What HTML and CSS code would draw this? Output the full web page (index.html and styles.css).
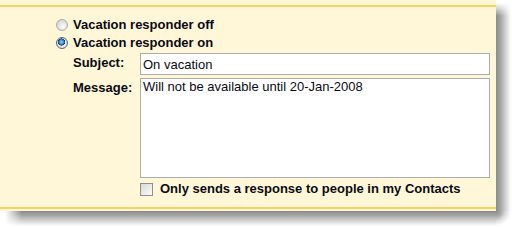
FILE: index.html
```html
<!doctype html>
<html lang="en">
<head>
<meta charset="utf-8">
<title>Vacation responder</title>
<link rel="stylesheet" href="styles.css">
</head>
<body>

<div class="frame">
    <div class="panel">
        <div class="box">
            <label class="opt"><input class="radio" type="radio" name="vac"> Vacation responder off</label>
            <label class="opt"><input class="radio" type="radio" name="vac" checked> Vacation responder on</label>

            <div class="fields">
                <span class="lbl">Subject:</span>
                <input class="subject" type="text" value="On vacation">
                <span class="lbl">Message:</span>
                <textarea class="message">Will not be available until 20-Jan-2008</textarea>
                <span></span>
                <label class="check"><input class="box-check" type="checkbox"> Only sends a response to people in my Contacts</label>
            </div>
        </div>
    </div>
</div>

</body>
</html>
```

FILE: styles.css
```css
body{
    margin: 0;
    background: #fff;
    font-family: "Liberation Sans", Arial, sans-serif;
    font-size: 13px;
    color: #0a0a14;
}
/* frame paints the drop shadow round the panel */
.frame{
    width: 511px;
    height: 226px;
    background:
        linear-gradient(to bottom, #fff 3px, rgba(255,255,255,0) 16px) 496px 0 / 15px 16px no-repeat,
        linear-gradient(to right, #fff 5px, rgba(255,255,255,0) 22px) 0 211px / 22px 15px no-repeat,
        linear-gradient(to right, #8a8a8a, #a6a6a6 30%, #dadada 70%, #fff) 496px 0 / 15px 211px no-repeat,
        linear-gradient(to bottom, #8a8a8a, #a6a6a6 30%, #dadada 70%, #fff) 0 211px / 496px 15px no-repeat,
        radial-gradient(circle at 0 0, #8a8a8a, #a8a8a8 5px, #e0e0e0 10px, #fff 15px) 496px 211px / 15px 15px no-repeat,
        #fff;
}
.panel{
    width: 496px;
    height: 211px;
    padding-top: 5px;
    box-sizing: border-box;
    background-color: #fff7d7;
}
.box{
    padding: 9px 0 9px 0;
    border-top: 2px solid #fad163;
    border-bottom: 2px solid #fad163;
}
.opt{
    display: flex;
    align-items: center;
    height: 18px;
    padding-left: 56px;
    font-weight: bold;
    line-height: 18px;
}
.radio{
    appearance: none;
    -webkit-appearance: none;
    width: 12px;
    height: 12px;
    margin: 0 5px 0 0;
    border: 1px solid #a9a9a9;
    border-radius: 50%;
    box-sizing: border-box;
    background: radial-gradient(circle at 60% 65%, #fdfdfd 0, #e4e4e4 45%, #cfcfcf 100%);
}
.radio:checked{
    border-color: #5a6470;
    background:
        radial-gradient(circle at 45% 40%, #9fd4ff 0, #2f86c8 28%, #0c3f6c 42%, transparent 46%),
        radial-gradient(circle, #f4f4f4 0, #dcdcdc 100%);
}
.fields{
    display: grid;
    grid-template-columns: 67px 350px;
    row-gap: 3px;
    margin-top: 1px;
    padding-left: 73px;
}
.lbl{
    font-weight: bold;
    line-height: 18px;
    padding-top: 1px;
}
.subject,
.message{
    box-sizing: border-box;
    width: 350px;
    margin: 0;
    border: 1px solid #adadad;
    background: #fff;
    font-family: "Liberation Sans", Arial, sans-serif;
    font-size: 13px;
    color: #0a0a14;
    outline: none;
}
.subject{
    height: 22px;
    padding: 0 2px;
}
.message{
    height: 100px;
    padding: 0 2px;
    resize: none;
    line-height: 15px;
}
.check{
    display: flex;
    align-items: center;
    height: 18px;
    margin-top: -1px;
    font-weight: bold;
    line-height: 18px;
}
.box-check{
    appearance: none;
    -webkit-appearance: none;
    width: 13px;
    height: 13px;
    margin: 0 7px 0 0;
    border: 1px solid #8f8f8f;
    box-sizing: border-box;
    background: linear-gradient(135deg, #d8d8d4 0, #eeeeec 60%, #fbfbfb 100%);
}
```
